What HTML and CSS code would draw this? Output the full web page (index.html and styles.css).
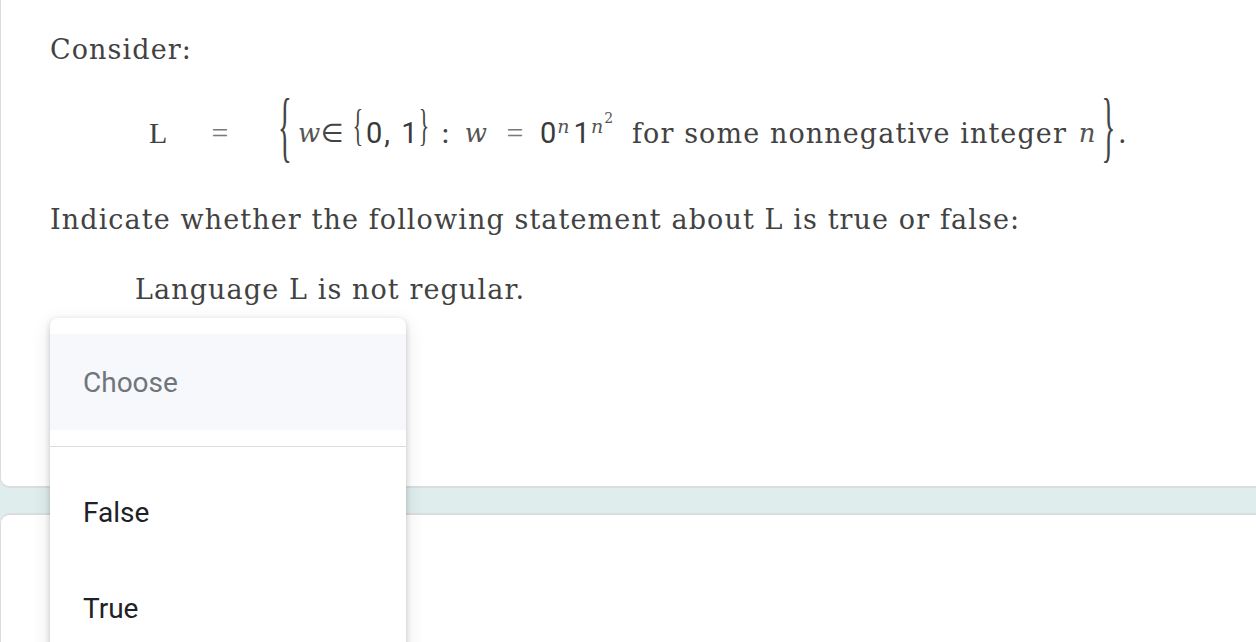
FILE: index.html
```html
<!DOCTYPE html>
<html>
<head>
<meta charset="utf-8">
<link rel="stylesheet" href="styles.css">
</head>
<body>
<div class="card top-card">
  <p class="para consider">Consider:</p>
  <div class="math">
    <span class="mi m-l">L</span>
    <span class="mi m-eq m-eq1">=</span>
    <span class="mi big-brace bb-open">{</span>
    <span class="mi m-var m-w1">w</span>
    <span class="mi m-in">∈</span>
    <span class="mi small-brace sb-open">{</span>
    <span class="mi m-set">0, 1</span>
    <span class="mi small-brace sb-close">}</span>
    <span class="mi m-colon">:</span>
    <span class="mi m-var m-w2">w</span>
    <span class="mi m-eq m-eq2">=</span>
    <span class="mi m-pow"><span class="dg">0</span><span class="m-sup">n</span><span class="dg dg1">1</span><span class="m-sup">n<span class="m-sq">2</span></span></span>
    <span class="mi m-text">for some nonnegative integer</span>
    <span class="mi m-var m-n">n</span>
    <span class="mi big-brace bb-close">}</span>
    <span class="mi m-dot">.</span>
  </div>
  <p class="para indicate">Indicate whether the following statement about L is true or false:</p>
  <p class="para statement">Language L is not regular.</p>
</div>
<div class="card bottom-card"></div>

<div class="dropdown">
  <div class="opt opt-choose">Choose</div>
  <div class="sep"></div>
  <div class="opt">False</div>
  <div class="opt">True</div>
</div>
</body>
</html>
```

FILE: styles.css
```css
html, body {
  margin: 0;
  padding: 0;
}
body {
  background: #dfeeed;
  width: 1256px;
  height: 642px;
  overflow: hidden;
  position: relative;
}
.card {
  background: #fff;
  border: 2px solid #dadce0;
  border-left-width: 1px;
  border-right: none;
}
.top-card {
  border-top: none;
  border-radius: 0 0 0 10px;
  height: 486px;
  padding-left: 49px;
  box-sizing: content-box;
  overflow: hidden;
}
.bottom-card {
  margin-top: 25px;
  border-bottom: none;
  border-radius: 10px 0 0 0;
  height: 200px;
}
.para {
  margin: 0;
  font-family: "DejaVu Serif", serif;
  font-size: 27px;
  letter-spacing: 1.1px;
  color: #424242;
  line-height: 36px;
  white-space: nowrap;
}
.consider {
  padding-top: 32px;
}
.math {
  display: flex;
  align-items: center;
  height: 70px;
  margin-top: 30px;
  font-family: "Liberation Serif", serif;
  font-size: 30px;
  color: #424242;
}
.mi {
  flex: none;
  text-align: center;
  white-space: nowrap;
}
.m-l { margin-left: 99px; width: 18px; }
.m-eq { color: #7a7a7a; width: 20px; }
.m-eq1 { margin-left: 43px; }
.big-brace {
  font-size: 48px;
  line-height: 1;
  width: 20px;
  color: #444;
  transform: translateY(-6px) scale(0.6, 1.62);
}
.bb-open { margin-left: 44px; }
.m-var {
  font-family: "DejaVu Serif", serif;
  font-style: italic;
  font-size: 26px;
  color: #555;
}
.m-w1 { margin-left: 4px; width: 20px; }
.m-in {
  margin-left: 3px;
  width: 20px;
  font-family: "DejaVu Sans", sans-serif;
  font-size: 26px;
  color: #444;
}
.small-brace {
  width: 16px;
  font-size: 30px;
  line-height: 1;
  color: #444;
  transform: translateY(-8px) scale(0.72, 1.5);
}
.sb-open { margin-left: 9px; }
.m-set {
  width: 50px;
  text-align: left;
  font-family: Roboto, "Liberation Sans", sans-serif;
  font-size: 29px;
  letter-spacing: 2px;
  color: #3a3a3a;
}
.m-colon { margin-left: 9px; width: 9px; }
.m-w2 { margin-left: 14px; width: 24px; }
.m-eq2 { margin-left: 17px; }
.m-pow {
  margin-left: 15px;
  width: 88px;
  text-align: left;
  font-family: Roboto, "Liberation Sans", sans-serif;
  font-size: 29px;
  color: #3a3a3a;
}
.m-sup {
  font-family: "DejaVu Serif", serif;
  font-style: italic;
  font-size: 19px;
  color: #555;
  vertical-align: 10px;
  line-height: 0;
  margin-left: 1px;
}
.dg1 { margin-left: 4px; }
.m-sq {
  font-style: normal;
  font-size: 14px;
  vertical-align: 10px;
  margin-left: 1px;
}
.m-text {
  width: 436px;
  margin-left: 4px;
  text-align: left;
  font-family: "DejaVu Serif", serif;
  font-size: 27px;
  letter-spacing: 1.1px;
}
.m-n { margin-left: 10px; width: 18px; }
.bb-close { margin-left: 2px; width: 18px; }
.m-dot {
  margin-left: 2px;
  font-family: "DejaVu Serif", serif;
  font-size: 27px;
}
.indicate {
  margin-top: 34px;
}
.statement {
  margin-top: 34px;
  margin-left: 85px;
}
.dropdown {
  position: absolute;
  left: 50px;
  top: 318px;
  width: 356px;
  height: 400px;
  background: #fff;
  border-radius: 8px;
  box-shadow: 0 2px 6px rgba(0,0,0,0.18), 0 6px 20px rgba(0,0,0,0.10);
  padding-top: 16px;
  box-sizing: border-box;
}
.opt {
  height: 96px;
  display: flex;
  align-items: center;
  padding-left: 33px;
  font-family: Roboto, "Liberation Sans", sans-serif;
  font-size: 28px;
  color: #202124;
}
.opt-choose {
  background: #f7f8fc;
  color: #70757a;
}
.sep {
  height: 1px;
  background: #dadce0;
  margin: 16px 0 17px;
}
```
